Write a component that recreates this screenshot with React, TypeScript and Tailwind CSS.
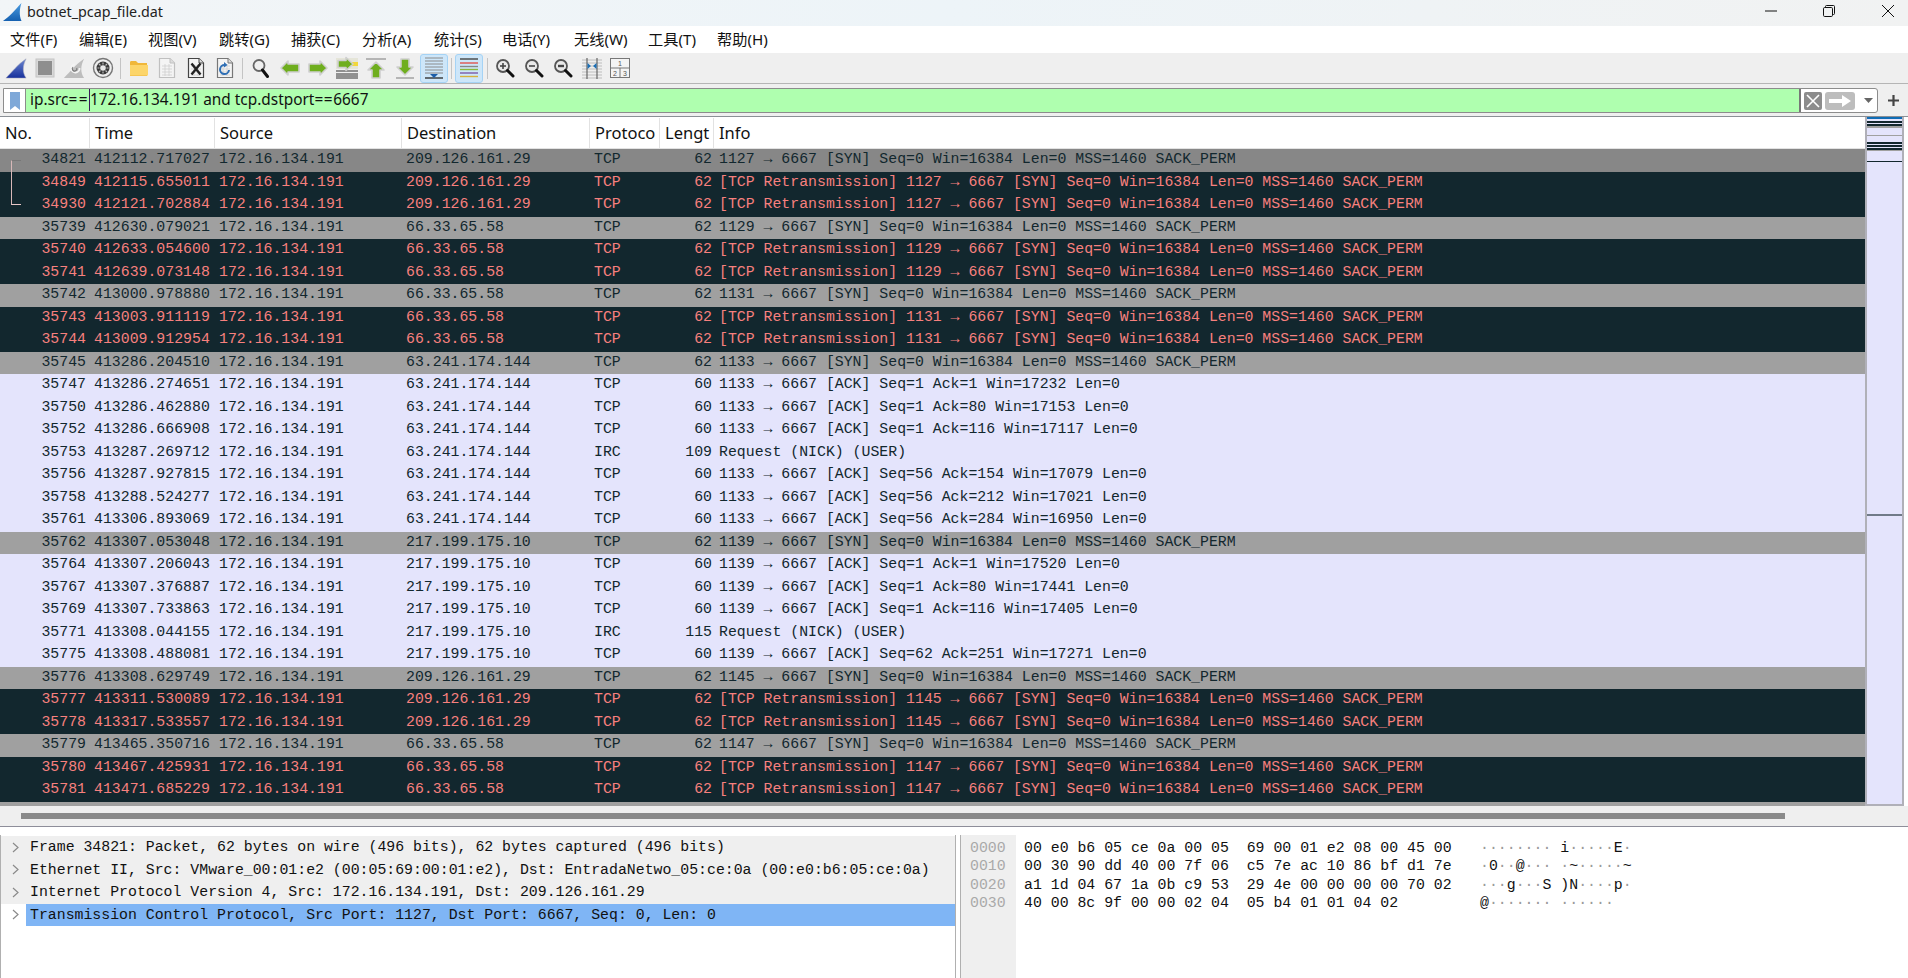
import React from "react";

type Kind = "syn" | "first" | "retrans" | "data";

interface Packet {
  no: string;
  time: string;
  dst: string;
  proto: string;
  len: string;
  info: string;
  kind: Kind;
}

const SRC = "172.16.134.191";

const syn = (port: number) => `${port} → 6667 [SYN] Seq=0 Win=16384 Len=0 MSS=1460 SACK_PERM`;
const retrans = (port: number) => `[TCP Retransmission] ${syn(port)}`;
const ack = (port: number, seq: number, a: number, win: number) =>
  `${port} → 6667 [ACK] Seq=${seq} Ack=${a} Win=${win} Len=0`;

const p = (no: number, time: string, dst: string, len: number, info: string, kind: Kind, proto = "TCP"): Packet => ({
  no: String(no),
  time,
  dst,
  proto,
  len: String(len),
  info,
  kind,
});

const packets: Packet[] = [
  p(34821, "412112.717027", "209.126.161.29", 62, syn(1127), "first"),
  p(34849, "412115.655011", "209.126.161.29", 62, retrans(1127), "retrans"),
  p(34930, "412121.702884", "209.126.161.29", 62, retrans(1127), "retrans"),
  p(35739, "412630.079021", "66.33.65.58", 62, syn(1129), "syn"),
  p(35740, "412633.054600", "66.33.65.58", 62, retrans(1129), "retrans"),
  p(35741, "412639.073148", "66.33.65.58", 62, retrans(1129), "retrans"),
  p(35742, "413000.978880", "66.33.65.58", 62, syn(1131), "syn"),
  p(35743, "413003.911119", "66.33.65.58", 62, retrans(1131), "retrans"),
  p(35744, "413009.912954", "66.33.65.58", 62, retrans(1131), "retrans"),
  p(35745, "413286.204510", "63.241.174.144", 62, syn(1133), "syn"),
  p(35747, "413286.274651", "63.241.174.144", 60, ack(1133, 1, 1, 17232), "data"),
  p(35750, "413286.462880", "63.241.174.144", 60, ack(1133, 1, 80, 17153), "data"),
  p(35752, "413286.666908", "63.241.174.144", 60, ack(1133, 1, 116, 17117), "data"),
  p(35753, "413287.269712", "63.241.174.144", 109, "Request (NICK) (USER)", "data", "IRC"),
  p(35756, "413287.927815", "63.241.174.144", 60, ack(1133, 56, 154, 17079), "data"),
  p(35758, "413288.524277", "63.241.174.144", 60, ack(1133, 56, 212, 17021), "data"),
  p(35761, "413306.893069", "63.241.174.144", 60, ack(1133, 56, 284, 16950), "data"),
  p(35762, "413307.053048", "217.199.175.10", 62, syn(1139), "syn"),
  p(35764, "413307.206043", "217.199.175.10", 60, ack(1139, 1, 1, 17520), "data"),
  p(35767, "413307.376887", "217.199.175.10", 60, ack(1139, 1, 80, 17441), "data"),
  p(35769, "413307.733863", "217.199.175.10", 60, ack(1139, 1, 116, 17405), "data"),
  p(35771, "413308.044155", "217.199.175.10", 115, "Request (NICK) (USER)", "data", "IRC"),
  p(35775, "413308.488081", "217.199.175.10", 60, ack(1139, 62, 251, 17271), "data"),
  p(35776, "413308.629749", "209.126.161.29", 62, syn(1145), "syn"),
  p(35777, "413311.530089", "209.126.161.29", 62, retrans(1145), "retrans"),
  p(35778, "413317.533557", "209.126.161.29", 62, retrans(1145), "retrans"),
  p(35779, "413465.350716", "66.33.65.58", 62, syn(1147), "syn"),
  p(35780, "413467.425931", "66.33.65.58", 62, retrans(1147), "retrans"),
  p(35781, "413471.685229", "66.33.65.58", 62, retrans(1147), "retrans"),
];

const rowStyle: Record<Kind, string> = {
  first: "bg-[#878787] text-[#12272e]",
  syn: "bg-[#a0a0a0] text-[#12272e]",
  retrans: "bg-[#12272e] text-[#f7807e]",
  data: "bg-[#e4e4fc] text-[#12272e]",
};

const menus = [
  { label: "文件(F)", w: "w-[69px]" },
  { label: "编辑(E)", w: "w-[69px]" },
  { label: "视图(V)", w: "w-[71px]" },
  { label: "跳转(G)", w: "w-[72px]" },
  { label: "捕获(C)", w: "w-[71px]" },
  { label: "分析(A)", w: "w-[72px]" },
  { label: "统计(S)", w: "w-[68px]" },
  { label: "电话(Y)", w: "w-[72px]" },
  { label: "无线(W)", w: "w-[74px]" },
  { label: "工具(T)", w: "w-[69px]" },
  { label: "帮助(H)", w: "w-[70px]" },
];

const tree = [
  "Frame 34821: Packet, 62 bytes on wire (496 bits), 62 bytes captured (496 bits)",
  "Ethernet II, Src: VMware_00:01:e2 (00:05:69:00:01:e2), Dst: EntradaNetwo_05:ce:0a (00:e0:b6:05:ce:0a)",
  "Internet Protocol Version 4, Src: 172.16.134.191, Dst: 209.126.161.29",
  "Transmission Control Protocol, Src Port: 1127, Dst Port: 6667, Seq: 0, Len: 0",
];

const hexLines = [
  ["0000", "00 e0 b6 05 ce 0a 00 05  69 00 01 e2 08 00 45 00", "········ i·····E·"],
  ["0010", "00 30 90 dd 40 00 7f 06  c5 7e ac 10 86 bf d1 7e", "·0··@··· ·~·····~"],
  ["0020", "a1 1d 04 67 1a 0b c9 53  29 4e 00 00 00 00 70 02", "···g···S )N····p·"],
  ["0030", "40 00 8c 9f 00 00 02 04  05 b4 01 01 04 02", "@······· ······"],
];

const stripes = [
  "h-[2px] bg-[#0f6cb5]",
  "h-[2px] bg-[#e4e4fc]",
  "h-[2px] bg-[#12272e]",
  "h-px bg-[#e4e4fc]",
  "h-[2px] bg-[#12272e]",
  "h-[2px] bg-[#a0a0a0]",
  "h-[7px] bg-[#e4e4fc]",
  "h-px bg-[#a0a0a0]",
  "h-[6px] bg-[#e4e4fc]",
  "h-[2px] bg-[#12272e]",
  "h-px bg-[#e4e4fc]",
  "h-[2px] bg-[#12272e]",
  "h-px bg-[#e4e4fc]",
  "h-[2px] bg-[#12272e]",
  "h-px bg-[#a0a0a0]",
  "h-[10px] bg-[#e4e4fc]",
  "h-px bg-[#12272e]",
  "h-[352px] bg-[#e4e4fc]",
  "h-[2px] bg-[#707a88]",
];

const Glass = ({ sign }: { sign?: "plus" | "minus" | "dot" }) => (
  <svg width="20" height="20" viewBox="0 0 20 20">
    <circle cx="8" cy="8" r="6" fill="#e8e8e8" stroke="#555" strokeWidth="1.8" />
    <path d="M12.5 12.5L18 18" stroke="#111" strokeWidth="3" strokeLinecap="round" />
    {sign && <path d="M5 8H11" stroke="#444" strokeWidth={sign === "dot" ? 2.4 : 1.6} />}
    {sign === "plus" && <path d="M8 5V11" stroke="#444" strokeWidth="1.6" />}
  </svg>
);

const Lines = ({ x = 1, w = 22, ys, color = "#555" }: { x?: number; w?: number; ys: number[]; color?: string }) => (
  <>
    {ys.map((y) => (
      <path key={y} d={`M${x} ${y}H${x + w}`} stroke={color} strokeWidth="1" />
    ))}
  </>
);

const Icon24 = ({ children }: { children: React.ReactNode }) => (
  <svg width="24" height="24" viewBox="0 0 24 24">
    {children}
  </svg>
);

const Arrow = ({ d }: { d: string }) => <path d={d} fill="#6fae1e" stroke="#cfcfcf" strokeWidth="1.6" strokeLinejoin="round" />;

const Doc = ({ children, border = "#c0c0c0" }: { children?: React.ReactNode; border?: string }) => (
  <Icon24>
    <path d="M4.5 2.5H15L19.5 7V21.5H4.5Z" fill="#f4f4f4" stroke={border} strokeWidth="1.2" />
    <path d="M15 2.5V7H19.5" fill="#ddd" stroke={border} strokeWidth="1" />
    <path d="M7 10H17M7 13H17M7 16H17M7 19H17M10 8V20M14 8V20" stroke="#cfcfcf" strokeWidth="0.8" />
    {children}
  </Icon24>
);

const Tool = ({ children, active }: { children: React.ReactNode; active?: boolean }) => (
  <div className="flex h-[30px] w-[28.8px] items-center justify-center">
    <div
      className={`flex h-[29px] w-[28px] items-center justify-center rounded-[3px] ${
        active ? "border border-[#a5d3f5] bg-[#cde6f9]" : ""
      }`}
    >
      {children}
    </div>
  </div>
);

const Sep = () => (
  <div className="flex h-[30px] w-[7px] items-center justify-center">
    <div className="h-[21px] w-px bg-[#c4c4c4]" />
  </div>
);

const Toolbar = () => (
  <div className="flex h-[31px] items-center border-b border-[#b5b5b5] bg-[#efefef] pl-[2px]">
    <Tool>
      <svg width="22" height="22" viewBox="0 0 24 24">
        <defs>
          <linearGradient id="finBlue" x1="0" y1="0" x2="0" y2="1">
            <stop offset="0" stopColor="#6b86d0" />
            <stop offset="1" stopColor="#17309c" />
          </linearGradient>
        </defs>
        <path d="M1 23C7 17 14 8 23 2C19 10 19 17 23 23Z" fill="url(#finBlue)" stroke="#aab" strokeWidth="0.6" />
      </svg>
    </Tool>
    <Tool>
      <svg width="20" height="20" viewBox="0 0 20 20">
        <rect x="1" y="1" width="18" height="18" fill="#d8d8d8" stroke="#c4c4c4" />
        <rect x="3" y="3" width="14" height="14" fill="#8e8e8e" />
      </svg>
    </Tool>
    <Tool>
      <svg width="22" height="22" viewBox="0 0 24 24">
        <path d="M1 23C7 17 14 8 23 2C19 10 19 17 23 23Z" fill="#bdbdbd" />
        <path d="M18 12A4.5 4.5 0 1 1 13 8" fill="none" stroke="#f4f4f4" strokeWidth="2" />
        <path d="M15 12A2.5 2.5 0 1 1 11 11" fill="none" stroke="#777" strokeWidth="1.2" />
      </svg>
    </Tool>
    <Tool>
      <svg width="22" height="22" viewBox="0 0 22 22">
        <circle cx="11" cy="11" r="9.5" fill="#eee" stroke="#777" strokeWidth="1.4" />
        <circle cx="11" cy="11" r="6.5" fill="#3a3a3a" />
        <circle cx="11" cy="11" r="2.8" fill="#e8e8e8" />
        <path d="M11 5.5V7.5M11 14.5V16.5M5.5 11H7.5M14.5 11H16.5M7 7L8.5 8.5M13.5 13.5L15 15M15 7L13.5 8.5M8.5 13.5L7 15" stroke="#bbb" strokeWidth="1.2" />
      </svg>
    </Tool>
    <Sep />
    <Tool>
      <svg width="22" height="22" viewBox="0 0 22 22">
        <path d="M2 5.5C2 4.5 2.5 4 3.5 4H8L10 6H19V19H2Z" fill="#f0b73a" />
        <path d="M2 8H20V18.5H2Z" fill="#fcd56a" />
      </svg>
    </Tool>
    <Tool>
      <Doc />
    </Tool>
    <Tool>
      <Doc border="#444">
        <path d="M7.5 7.5L16.5 18.5M16.5 7.5L7.5 18.5" stroke="#222" strokeWidth="2.4" />
      </Doc>
    </Tool>
    <Tool>
      <Doc border="#777">
        <path d="M16 14A4.5 4.5 0 1 1 12 9" fill="none" stroke="#2f6fb5" strokeWidth="2" />
        <path d="M11 6L14.5 9L11 11.5Z" fill="#2f6fb5" />
      </Doc>
    </Tool>
    <Sep />
    <Tool>
      <svg width="20" height="20" viewBox="0 0 20 20">
        <circle cx="8" cy="7.5" r="5.5" fill="#efefef" stroke="#666" strokeWidth="1.8" />
        <path d="M11.5 12L16.5 18.5" stroke="#111" strokeWidth="3" strokeLinecap="round" />
      </svg>
    </Tool>
    <Tool>
      <Icon24>
        <Arrow d="M3 12L10 5V8H21V16H10V19Z" />
      </Icon24>
    </Tool>
    <Tool>
      <Icon24>
        <Arrow d="M21 12L14 5V8H3V16H14V19Z" />
      </Icon24>
    </Tool>
    <Tool>
      <Icon24>
        <Lines ys={[15, 18, 20, 22]} color="#333" />
        <rect x="1" y="2" width="22" height="11" fill="#e5e5d8" />
        <rect x="16" y="6" width="7" height="4" fill="#f2d73c" />
        <Arrow d="M18 8L11 1.5V4.5H3V11.5H11V14.5Z" />
      </Icon24>
    </Tool>
    <Tool>
      <Icon24>
        <path d="M2 3H22" stroke="#b5b5b5" strokeWidth="2" />
        <Arrow d="M12 6L20 14H16V22H8V14H4Z" />
      </Icon24>
    </Tool>
    <Tool>
      <Icon24>
        <path d="M3 22H21" stroke="#b5b5b5" strokeWidth="2" />
        <Arrow d="M12 19L4 11H8V3H16V11H20Z" />
      </Icon24>
    </Tool>
    <Tool active>
      <Icon24>
        <Lines x={3} w={18} ys={[2, 5, 8, 11, 14, 17]} color="#8a8a8a" />
        <path d="M3 22H21" stroke="#333" strokeWidth="1.4" />
        <path d="M8 18H16L12 22Z" fill="#1c5ea8" />
      </Icon24>
    </Tool>
    <Sep />
    <Tool active>
      <Icon24>
        <path d="M3 3H21" stroke="#444" strokeWidth="1.4" />
        <path d="M3 7H21" stroke="#e0524f" strokeWidth="1.4" />
        <path d="M3 10.5H21" stroke="#888" strokeWidth="1.4" />
        <path d="M3 13.5H21" stroke="#8ab83c" strokeWidth="1.4" />
        <path d="M3 17H21" stroke="#7a5aa8" strokeWidth="1.4" />
        <path d="M3 20.5H21" stroke="#d8b23c" strokeWidth="1.4" />
      </Icon24>
    </Tool>
    <Sep />
    <Tool>
      <Glass sign="plus" />
    </Tool>
    <Tool>
      <Glass sign="minus" />
    </Tool>
    <Tool>
      <Glass sign="dot" />
    </Tool>
    <Tool>
      <Icon24>
        <Lines x={2} w={20} ys={[4, 7, 10, 13, 16, 19, 22]} color="#bdbdbd" />
        <path d="M7 2V23M17 2V23" stroke="#666" strokeWidth="1.2" />
        <path d="M7.5 7L11 10L7.5 13ZM16.5 7L13 10L16.5 13Z" fill="#1c6fb5" />
      </Icon24>
    </Tool>
    <Tool>
      <svg width="22" height="22" viewBox="0 0 22 22">
        <rect x="1.5" y="1.5" width="19" height="19" fill="#f4f4f4" stroke="#777" />
        <path d="M1.5 11H20.5M11 11V20.5" stroke="#777" />
        <text x="11" y="9" fontSize="7" textAnchor="middle" fill="#555" fontFamily="Liberation Sans, sans-serif">1</text>
        <text x="6" y="18.5" fontSize="7" textAnchor="middle" fill="#555" fontFamily="Liberation Sans, sans-serif">2</text>
        <text x="16" y="18.5" fontSize="7" textAnchor="middle" fill="#555" fontFamily="Liberation Sans, sans-serif">3</text>
      </svg>
    </Tool>
  </div>
);

const FilterBar = () => (
  <div className="flex h-[32px] items-start bg-[#efefef] pl-[3px] pt-[4px]">
    <div className="flex h-[25px] w-[1875px] items-stretch overflow-hidden rounded-r-[3px] border border-[#8c8c8c] bg-white">
      <div className="flex w-[22px] shrink-0 items-center justify-center border-r border-[#8c8c8c]">
        <svg width="12" height="18" viewBox="0 0 12 18">
          <path d="M1 0H11V18L6 14L1 18Z" fill="#7ea8d8" />
        </svg>
      </div>
      <div className="flex w-[1775px] shrink-0 items-center whitespace-pre border-r-2 border-[#777] bg-[#afffaf] pb-[1px] pl-[4px] text-[15.4px] text-[#111] [font-family:'Noto_Sans',sans-serif]">
        ip.src<span className="tracking-[1.5px]">==</span>
        <span className="inline-block h-[22px] w-px bg-[#3a1c5a]" />
        172.16.134.191 and tcp.dstport<span className="tracking-[0.6px]">==</span>6667
      </div>
      <div className="flex flex-1 items-center pl-[3px]">
        <div className="flex h-[18px] w-[18px] items-center justify-center rounded-[2px] bg-[#8c8c8c]">
          <svg width="14" height="14" viewBox="0 0 14 14">
            <path d="M1 1L13 13M13 1L1 13" stroke="#fff" strokeWidth="1.6" />
          </svg>
        </div>
        <div className="ml-[3px] flex h-[18px] w-[30px] items-center justify-center rounded-[3px] bg-[#bdbdbd]">
          <svg width="24" height="14" viewBox="0 0 24 14">
            <path d="M1 5H14V1L23 7L14 13V9H1Z" fill="#fff" />
          </svg>
        </div>
        <svg className="ml-[9px]" width="9" height="5" viewBox="0 0 9 5">
          <path d="M0 0H9L4.5 5Z" fill="#666" />
        </svg>
      </div>
    </div>
    <div className="flex h-[25px] flex-1 items-center justify-center">
      <svg width="11" height="11" viewBox="0 0 11 11">
        <path d="M5.5 0V11M0 5.5H11" stroke="#444" strokeWidth="2.2" />
      </svg>
    </div>
  </div>
);

const HeaderCell = ({ label, className }: { label: string; className: string }) => (
  <div className={`flex h-full items-center whitespace-nowrap border-r border-[#e2e2e2] pl-[5px] ${className}`}>
    {label}
  </div>
);

const PacketRow = ({ row }: { row: Packet }) => (
  <div className={`flex h-[22.5px] items-center whitespace-pre pb-[2px] ${rowStyle[row.kind]}`}>
    <div className="w-[90px] shrink-0 pr-[4px] text-right">{row.no}</div>
    <div className="w-[125px] shrink-0 pl-[4px]">{row.time}</div>
    <div className="w-[187px] shrink-0 pl-[4px]">{SRC}</div>
    <div className="w-[188px] shrink-0 pl-[4px]">{row.dst}</div>
    <div className="w-[70px] shrink-0 pl-[4px]">{row.proto}</div>
    <div className="w-[54px] shrink-0 pr-[2px] text-right">{row.len}</div>
    <div className="flex-1 pl-[5px]">{row.info}</div>
  </div>
);

const Minimap = () => (
  <div className="flex w-[39px] shrink-0 flex-col overflow-hidden border-x-2 border-b-2 border-[#b0b0b8] bg-[#e4e4fc]">
    {stripes.map((s, i) => (
      <div key={i} className={s} />
    ))}
  </div>
);

const Ascii = ({ text }: { text: string }) => (
  <>
    {text.split("").map((c, i) => (
      <span key={i} className={c === "·" ? "text-[#9a9a9a]" : "text-[#111]"}>
        {c}
      </span>
    ))}
  </>
);

export default function App() {
  return (
    <div className="flex h-[978px] w-[1908px] flex-col overflow-hidden bg-white [font-family:'Noto_Sans','Noto_Sans_CJK_SC',sans-serif]">
      {/* window title */}
      <div className="flex h-[26px] items-center bg-gradient-to-r from-[#f2f5f7] via-[#edf4f8] to-[#f1f2f2]">
        <div className="ml-[3px] mr-[5px] flex w-[19px] justify-center pb-[3px]">
          <svg width="19" height="20" viewBox="0 0 19 20">
            <defs>
              <linearGradient id="titleFin" x1="0" y1="0" x2="0" y2="1">
                <stop offset="0" stopColor="#4a9be0" />
                <stop offset="1" stopColor="#1560b0" />
              </linearGradient>
            </defs>
            <path d="M0 19C6 15 12 8 18.5 1C16.5 7 16 13 18.5 19Z" fill="url(#titleFin)" />
          </svg>
        </div>
        <span className="pb-[2px] text-[14.3px] text-[#222]">botnet_pcap_file.dat</span>
        <div className="ml-auto flex items-center pb-[4px]">
          <svg className="mr-[46px]" width="12" height="12" viewBox="0 0 12 12">
            <path d="M0 6H12" stroke="#111" strokeWidth="1" />
          </svg>
          <svg className="mr-[47px]" width="12" height="12" viewBox="0 0 12 12">
            <path d="M2.5 2.5V1.5A1 1 0 0 1 3.5 .5H10.5A1 1 0 0 1 11.5 1.5V8.5A1 1 0 0 1 10.5 9.5H9.5" fill="none" stroke="#111" />
            <rect x=".5" y="2.5" width="9" height="9" rx="1.2" fill="none" stroke="#111" />
          </svg>
          <svg className="mr-[14px]" width="12" height="12" viewBox="0 0 12 12">
            <path d="M0 0L12 12M12 0L0 12" stroke="#111" strokeWidth="1" />
          </svg>
        </div>
      </div>

      {/* menu */}
      <div className="flex h-[27px] items-center bg-white pl-[10px] text-[15.2px] text-[#111]">
        {menus.map((m) => (
          <span key={m.label} className={`shrink-0 whitespace-nowrap ${m.w}`}>
            {m.label}
          </span>
        ))}
      </div>

      <Toolbar />
      <FilterBar />
      <div className="h-px bg-[#8a8f95]" />

      {/* packet list */}
      <div className="flex h-[689px] shrink-0">
        <div className="relative flex w-[1865px] shrink-0 flex-col overflow-hidden">
          <div className="flex h-[32px] shrink-0 items-center border-b border-[#e2e2e2] bg-white pt-[1px] text-[16.5px] text-[#111]">
            <HeaderCell label="No." className="w-[90px] shrink-0" />
            <HeaderCell label="Time" className="w-[125px] shrink-0" />
            <HeaderCell label="Source" className="w-[187px] shrink-0" />
            <HeaderCell label="Destination" className="w-[188px] shrink-0" />
            <HeaderCell label="Protoco" className="w-[70px] shrink-0" />
            <HeaderCell label="Lengt" className="w-[54px] shrink-0" />
            <div className="pl-[5px]">Info</div>
          </div>
          <div className="text-[14.85px] [font-family:'Liberation_Mono',monospace]">
            {packets.map((r) => (
              <PacketRow key={r.no} row={r} />
            ))}
            {/* next row, only its top edge is still in view */}
            <div className="relative h-[5.5px] bg-[#a0a0a0]">
              <div className="absolute left-[828px] top-[4px] h-[2px] w-[5px] bg-[#12272e]" />
              <div className="absolute left-[863px] top-[4px] h-[2px] w-[5px] bg-[#12272e]" />
            </div>
          </div>
          {/* related packet bracket */}
          <div className="absolute left-[11px] top-[43px] h-[45px] w-[10px] border-b border-l border-t border-b-[#e8c8c8] border-l-[#d8b8b8] border-t-[#777]" />
        </div>
        <Minimap />
      </div>

      {/* horizontal scrollbar */}
      <div className="flex h-[21px] shrink-0 items-center border-b border-[#8e8e9a] bg-[#efefef] pl-[21px]">
        <div className="h-[6px] w-[1764px] bg-[#8a8a8a]" />
      </div>
      <div className="h-[8px] shrink-0" />

      {/* detail + bytes */}
      <div className="flex min-h-0 flex-1 text-[14.85px] text-[#111] [font-family:'Liberation_Mono',monospace]">
        <div className="w-[955px] shrink-0 border-l border-[#b0b0b0] pt-[1px]">
          {tree.map((t, i) => (
            <div key={t} className={`flex h-[22.5px] items-center whitespace-pre ${i < 3 ? "bg-[#efefef]" : ""}`}>
              <svg className="ml-[11px] mr-[7px] shrink-0" width="7" height="11" viewBox="0 0 7 11">
                <path d="M1 1L6 5.5L1 10" fill="none" stroke="#8a8a8a" strokeWidth="1.2" />
              </svg>
              <span className={`flex h-full flex-1 items-center pl-[4px] ${i === 3 ? "bg-[#7fb5f5]" : ""}`}>{t}</span>
            </div>
          ))}
        </div>
        <div className="w-[6px] shrink-0 border-x border-[#b0b0b0]" />
        <div className="w-[55px] shrink-0 bg-[#efefef] pl-[9px] pt-[4px] text-[#a9a9a9]">
          {hexLines.map((l) => (
            <div key={l[0]} className="h-[18.4px] leading-[18.4px]">
              {l[0]}
            </div>
          ))}
        </div>
        <div className="flex pl-[8px] pt-[4px]">
          <div className="w-[456px] whitespace-pre">
            {hexLines.map((l) => (
              <div key={l[0]} className="h-[18.4px] leading-[18.4px]">
                {l[1]}
              </div>
            ))}
          </div>
          <div className="whitespace-pre">
            {hexLines.map((l) => (
              <div key={l[0]} className="h-[18.4px] leading-[18.4px]">
                <Ascii text={l[2]} />
              </div>
            ))}
          </div>
        </div>
      </div>
    </div>
  );
}
